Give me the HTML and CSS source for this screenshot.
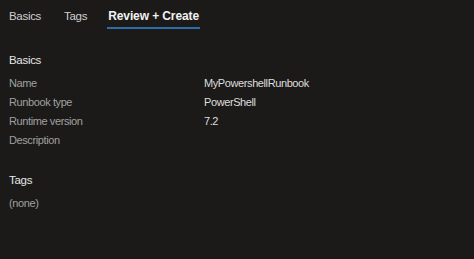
FILE: index.html
```html
<!DOCTYPE html>
<html>
<head>
<meta charset="utf-8">
<link rel="stylesheet" href="styles.css">
</head>
<body>
<div class="page">
  <nav class="tabs">
    <div class="tab">Basics</div>
    <div class="tab">Tags</div>
    <div class="tab active">Review + Create</div>
  </nav>
  <section class="section basics">
    <h2 class="title">Basics</h2>
    <div class="grid">
      <div class="label">Name</div><div class="value">MyPowershellRunbook</div>
      <div class="label">Runbook type</div><div class="value">PowerShell</div>
      <div class="label">Runtime version</div><div class="value">7.2</div>
      <div class="label">Description</div><div class="value"></div>
    </div>
  </section>
  <section class="section tags">
    <h2 class="title">Tags</h2>
    <div class="label">(none)</div>
  </section>
</div>
</body>
</html>
```
FILE: styles.css
```css
html, body {
  margin: 0;
  padding: 0;
  background: #1b1a19;
  height: 100%;
}
body {
  font-family: "Liberation Sans", Arial, sans-serif;
  font-size: 11px;
  letter-spacing: -0.4px;
  color: #d6d6d6;
}
.page {
  padding: 0 9px;
}
.tabs {
  display: flex;
  height: 29px;
}
.tab {
  font-size: 11.5px;
  letter-spacing: -0.3px;
  color: #cfcfcf;
  padding-top: 10px;
  margin-right: 23px;
  box-sizing: border-box;
  height: 29px;
}
.tab:nth-child(2) {
  margin-right: 20px;
}
.tab.active {
  font-size: 12px;
  letter-spacing: -0.1px;
  font-weight: bold;
  color: #f2f2f2;
  border-bottom: 2px solid #2d6ca7;
  padding: 9px 1px 0;
}
.basics {
  padding-top: 23px;
}
.title {
  margin: 0;
  font-size: 11.5px;
  letter-spacing: -0.3px;
  font-weight: normal;
  color: #e6e6e6;
  line-height: 16px;
}
.grid {
  display: grid;
  grid-template-columns: 195px 1fr;
  grid-auto-rows: 19px;
  margin-top: 6px;
  line-height: 19px;
}
.label {
  color: #a0a0a0;
}
.value {
  color: #dedede;
}
.tags {
  padding-top: 22px;
}
.tags .label {
  margin-top: 6px;
  line-height: 19px;
}
```
